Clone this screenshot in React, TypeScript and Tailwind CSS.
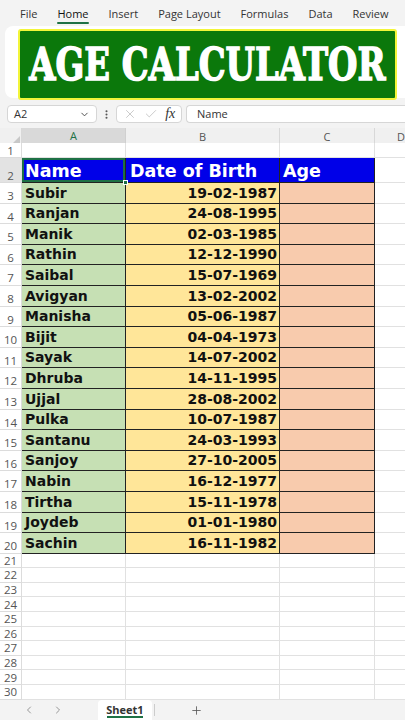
import { ChevronDown, ChevronLeft, ChevronRight, Plus, X, Check, EllipsisVertical } from 'lucide-react';

const people: [string, string][] = [
  ['Subir', '19-02-1987'],
  ['Ranjan', '24-08-1995'],
  ['Manik', '02-03-1985'],
  ['Rathin', '12-12-1990'],
  ['Saibal', '15-07-1969'],
  ['Avigyan', '13-02-2002'],
  ['Manisha', '05-06-1987'],
  ['Bijit', '04-04-1973'],
  ['Sayak', '14-07-2002'],
  ['Dhruba', '14-11-1995'],
  ['Ujjal', '28-08-2002'],
  ['Pulka', '10-07-1987'],
  ['Santanu', '24-03-1993'],
  ['Sanjoy', '27-10-2005'],
  ['Nabin', '16-12-1977'],
  ['Tirtha', '15-11-1978'],
  ['Joydeb', '01-01-1980'],
  ['Sachin', '16-11-1982'],
];

const tabs = ['File', 'Home', 'Insert', 'Page Layout', 'Formulas', 'Data', 'Review'];
const cols = 'grid grid-cols-[22px_104px_154px_95px_1fr]';
const ui = { fontFamily: '"Open Sans", "Noto Sans", sans-serif' };
const cell = { fontFamily: '"DejaVu Sans", Verdana, sans-serif' };

function RowNum({ n, active }: { n: number; active?: boolean }) {
  return (
    <div
      className={`flex items-end justify-center pb-[1px] text-[11.5px] leading-none text-[#555] border-r border-b border-[#dcdcdc] ${active ? 'bg-[#e3e3e3]' : 'bg-white'}`}
      style={ui}
    >
      {n}
    </div>
  );
}

function EmptyRow({ n, h }: { n: number; h: string }) {
  return (
    <div className={`${cols} ${h}`}>
      <RowNum n={n} />
      <div className="border-r border-b border-[#e1e1e1] bg-white" />
      <div className="border-r border-b border-[#e1e1e1] bg-white" />
      <div className="border-r border-b border-[#e1e1e1] bg-white" />
      <div className="border-b border-[#e1e1e1] bg-white" />
    </div>
  );
}

export default function App() {
  return (
    <div className="w-[405px] h-[720px] flex flex-col bg-[#f3f3f3] overflow-hidden text-[#333]">
      {/* Menu tabs */}
      <div className="h-[26px] flex items-start pl-[20px] gap-[20px] pt-[6px] text-[11px]" style={ui}>
        {tabs.map((t) => (
          <div key={t} className="flex flex-col items-center">
            <span className={`leading-[15px] ${t === 'Home' ? 'text-[#111]' : 'text-[#333]'}`}>{t}</span>
            {t === 'Home' && <div className="mt-[1px] h-[2px] w-full bg-[#1e7145] rounded" />}
          </div>
        ))}
      </div>

      {/* Ribbon with title banner */}
      <div className="relative h-[74px]">
        <div className="ml-[5px] h-[72px] bg-white rounded-l-lg" />
        <div className="absolute left-[18px] top-[3px] w-[379px] h-[71px] bg-[#0b780b] border-2 border-[#f2f53a] rounded-[3px] flex items-center justify-center overflow-hidden">
          <span
            className="inline-block text-white font-bold text-[45px] leading-none whitespace-nowrap scale-x-[0.75] [-webkit-text-stroke:1.5px_white]"
            style={{ fontFamily: '"DejaVu Serif", "Liberation Serif", serif' }}
          >
            AGE CALCULATOR
          </span>
        </div>
      </div>

      {/* Formula bar */}
      <div className="h-[28px] flex items-center pl-[7px] gap-[4px]" style={ui}>
        <div className="w-[90px] h-[18px] bg-white border border-[#d6d6d6] rounded-[4px] flex items-center justify-between px-[6px] text-[11px]">
          <span>A2</span>
          <ChevronDown size={11} strokeWidth={2} className="text-[#444]" />
        </div>
        <EllipsisVertical size={11} strokeWidth={2.5} className="text-[#555]" />
        <div className="w-[66px] h-[18px] bg-white border border-[#d6d6d6] rounded-[4px] flex items-center justify-around px-[2px]">
          <X size={14} strokeWidth={1.2} className="text-[#b5b5b5]" />
          <Check size={14} strokeWidth={1.2} className="text-[#b5b5b5]" />
          <span className="italic text-[14px] leading-none text-[#333]" style={{ fontFamily: '"Liberation Serif", serif' }}>fx</span>
        </div>
        <div className="flex-1 h-[18px] bg-white border border-[#d6d6d6] border-r-0 rounded-l-[4px] flex items-center pl-[10px] text-[11px]">
          Name
        </div>
      </div>

      {/* Sheet grid */}
      <div className="flex-1 flex flex-col bg-white">
        <div className={`${cols} h-[15px] bg-[#f0f0f0] text-[11px] text-[#555]`} style={ui}>
          <div className="border-r border-b border-[#d8d8d8] flex items-end justify-end">
            <div className="w-0 h-0 border-l-[9px] border-l-transparent border-b-[9px] border-b-[#c8c8c8] mr-[1px] mb-[1px]" />
          </div>
          <div className="bg-[#d9d9d9] border-r border-[#d0d0d0] border-b-2 border-b-[#1e7145] flex items-center justify-center text-[#1e7145]">A</div>
          <div className="border-r border-b border-[#d8d8d8] flex items-center justify-center">B</div>
          <div className="border-r border-b border-[#d8d8d8] flex items-center justify-center">C</div>
          <div className="border-b border-[#d8d8d8] flex items-center justify-end">D</div>
        </div>

        <EmptyRow n={1} h="h-[15px]" />

        {/* Header row */}
        <div className={`${cols} h-[25px]`} style={cell}>
          <RowNum n={2} active />
          <div className="relative bg-[#0000e8] border-r border-b border-[#222] text-white font-bold text-[17.5px] leading-none flex items-end pl-[3px] pb-[2px] shadow-[inset_0_0_0_2px_#1e7145]">
            Name
            <div className="absolute right-[-3px] bottom-[-3px] w-[5px] h-[5px] bg-[#1e7145] border border-white z-10" />
          </div>
          <div className="bg-[#0000e8] border-r border-b border-[#222] text-white font-bold text-[17.5px] leading-none flex items-end pl-[4px] pb-[2px]">
            Date of Birth
          </div>
          <div className="bg-[#0000e8] border-r border-b border-[#222] text-white font-bold text-[17.5px] leading-none flex items-end pl-[3px] pb-[2px]">
            Age
          </div>
          <div className="border-b border-[#e1e1e1]" />
        </div>

        {people.map(([name, dob], i) => (
          <div key={name} className={`${cols} h-[20.6px]`} style={cell}>
            <RowNum n={i + 3} />
            <div className="bg-[#c6e0b4] border-r border-b border-[#222] text-[#111] font-bold text-[14px] leading-none flex items-end pl-[3px] pb-[3px]">
              {name}
            </div>
            <div className="bg-[#ffe699] border-r border-b border-[#222] text-[#111] font-bold text-[14px] leading-none flex items-end justify-end pr-[2px] pb-[3px]">
              {dob}
            </div>
            <div className="bg-[#f8cbad] border-r border-b border-[#222]" />
            <div className="border-b border-[#e1e1e1]" />
          </div>
        ))}

        {[21, 22, 23, 24, 25, 26, 27, 28, 29, 30].map((n) => (
          <EmptyRow key={n} n={n} h="h-[14.6px]" />
        ))}
      </div>

      {/* Sheet tabs */}
      <div className="h-[20px] shrink-0 flex items-center text-[#777]" style={ui}>
        <ChevronLeft size={12} strokeWidth={1.5} className="ml-[23px]" />
        <ChevronRight size={12} strokeWidth={1.5} className="ml-[17px]" />
        <div className="ml-[34px] h-full w-[54px] bg-white rounded-t-[4px] flex flex-col items-center justify-center">
          <span className="text-[11px] font-bold text-[#333] leading-[13px]">Sheet1</span>
          <div className="w-[36px] h-[2px] bg-[#1e7145]" />
        </div>
        <div className="w-px h-[12px] bg-[#ccc] ml-[2px]" />
        <Plus size={13} strokeWidth={1.5} className="ml-[35px] text-[#555]" />
      </div>
    </div>
  );
}
